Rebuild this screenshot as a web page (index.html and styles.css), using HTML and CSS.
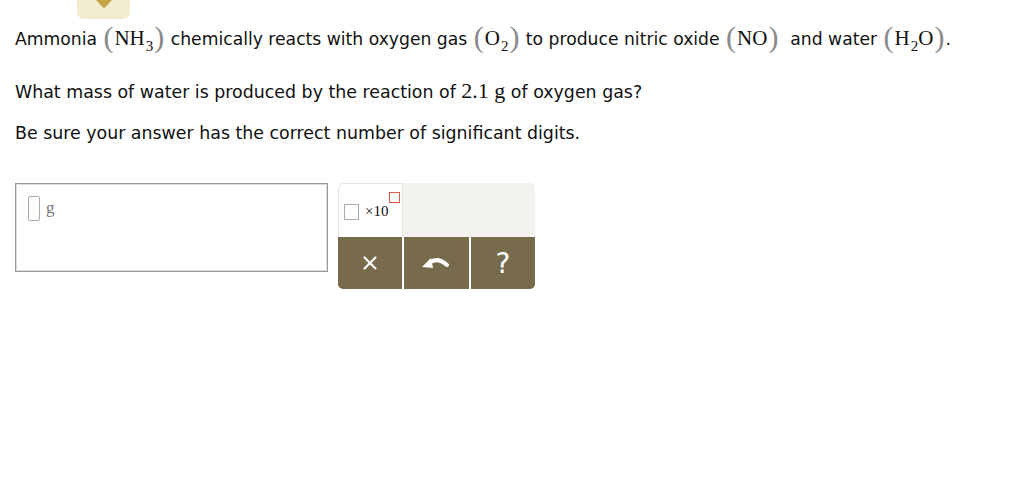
FILE: index.html
```html
<!DOCTYPE html>
<html>
<head>
<meta charset="utf-8">
<link rel="stylesheet" href="styles.css">
</head>
<body>
<div class="tab"><svg class="tab-icon" width="18" height="9" viewBox="0 0 18 9"><path d="M1 0 L17 0 L10.5 7 Q9 8.5 7.5 7 Z" fill="#c3a74a"/></svg></div>
<div class="page">
  <p class="line first">Ammonia <span class="m"><span class="par">(</span>NH<sub>3</sub><span class="par">)</span></span> chemically reacts with oxygen gas <span class="m"><span class="par">(</span>O<sub>2</sub><span class="par">)</span></span> to produce nitric oxide <span class="m"><span class="par">(</span>NO<span class="par">)</span></span>&nbsp; and water <span class="m"><span class="par">(</span>H<sub>2</sub>O<span class="par">)</span></span>.</p>
  <p class="line">What mass of water is produced by the reaction of <span class="m m2">2.1 g</span> of oxygen gas?</p>
  <p class="line">Be sure your answer has the correct number of significant digits.</p>
  <div class="work">
    <div class="answer">
      <span class="slot"></span><span class="unit">g</span>
    </div>
    <div class="pad">
      <div class="pad-top">
        <div class="sci"><span class="sbox"></span><span class="x10">×10</span><span class="exp"></span></div>
        <div class="blank"></div>
      </div>
      <div class="pad-bot">
        <div class="btn"><svg width="16" height="16" viewBox="0 0 16 16"><path d="M2.5 2.5 L13.5 13.5 M13.5 2.5 L2.5 13.5" stroke="#fff" stroke-width="2.2" stroke-linecap="round"/></svg></div>
        <div class="btn"><svg width="30" height="16" viewBox="0 0 30 16"><path d="M8.5 8 Q16 1.5 26 10" fill="none" stroke="#fff" stroke-width="4" stroke-linecap="round"/><path d="M1 12 L10 3 L12 13 Z" fill="#fff"/></svg></div>
        <div class="btn q">?</div>
      </div>
    </div>
  </div>
</div>
</body>
</html>
```
FILE: styles.css
```css
html, body { margin: 0; padding: 0; background: #fff; }
body { width: 1024px; height: 483px; overflow: hidden; position: relative; }
.tab {
  position: absolute; left: 77px; top: 0; width: 53px; height: 19px;
  background: #f3edcf; border-radius: 0 0 7px 7px;
  display: flex; justify-content: center;
}
.tab-icon { display: block; margin-top: 0; }
.page { padding: 23px 0 0 15px; font-family: "DejaVu Sans", Verdana, sans-serif; font-size: 17.4px; color: #111; }
.line { margin: 0; line-height: 22px; }
.line.first { line-height: 30px; font-size: 17.2px; }
.line:nth-child(2) { margin-top: 26px; }
.line:nth-child(3) { margin-top: 19px; }
.m { font-family: "Liberation Serif", "Times New Roman", serif; font-size: 21px; color: #111; }
.m2 { font-size: 22px; }
.m sub { font-size: 15px; vertical-align: -6px; line-height: 0; margin-left: 1px; }
.par { font-size: 30px; color: #8a8a8a; vertical-align: -2px; line-height: 0; margin: 0 1px; }
.work { display: flex; gap: 10px; margin-top: 39px; align-items: flex-start; }
.answer {
  width: 311px; height: 87px; border: 1px solid #999; box-shadow: inset 0 0 0 1px #ddd;
  display: flex; align-items: flex-start;
}
.slot { display: block; width: 10px; height: 23px; border: 1.5px solid #aaa; border-radius: 2px; margin: 12px 0 0 12px; }
.unit { font-family: "Liberation Serif", serif; font-size: 17px; color: #777; margin: 14px 0 0 6px; }
.pad { width: 197px; border-radius: 5px; overflow: hidden; }
.pad-top { display: flex; height: 54px; background: #f3f2ef; }
.sci { width: 65px; background: #fff; border: 1px solid #e6e4de; border-bottom: none; border-radius: 5px 0 0 0; box-sizing: border-box; position: relative; }
.sbox { position: absolute; left: 5px; top: 20px; width: 15px; height: 16px; border: 1.5px solid #aaa; box-sizing: border-box; }
.x10 { position: absolute; left: 26px; top: 19px; font-family: "Liberation Serif", serif; font-size: 15px; color: #111; }
.exp { position: absolute; left: 50px; top: 8px; width: 11px; height: 11px; border: 1.5px solid #e0574b; box-sizing: border-box; }
.blank { flex: 1; }
.pad-bot { display: flex; gap: 2px; height: 52px; background: #fff; }
.btn { flex: 1; background: #776b4b; display: flex; align-items: center; justify-content: center; color: #fff; }
.btn.q { font-family: "DejaVu Sans", sans-serif; font-size: 28px; }
```
